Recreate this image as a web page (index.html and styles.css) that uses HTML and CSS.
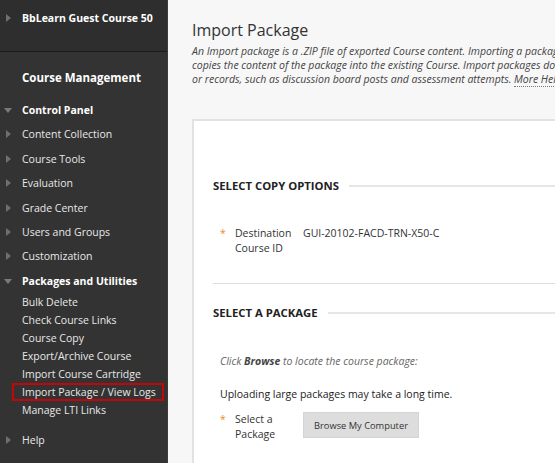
FILE: index.html
```html
<!DOCTYPE html>
<html>
<head>
<meta charset="utf-8">
<link rel="stylesheet" href="styles.css">
</head>
<body>
<div class="page">
  <aside class="sidebar">
    <div class="course-head">
      <span class="tri tri-right"></span>
      <span class="course-name">BbLearn Guest Course 50</span>
    </div>
    <div class="nav">
      <div class="nav-title">Course Management</div>
      <div class="nav-item open"><span class="tri tri-down"></span><span class="strong">Control Panel</span></div>
      <div class="nav-item"><span class="tri tri-right"></span><span>Content Collection</span></div>
      <div class="nav-item"><span class="tri tri-right"></span><span>Course Tools</span></div>
      <div class="nav-item"><span class="tri tri-right"></span><span>Evaluation</span></div>
      <div class="nav-item"><span class="tri tri-right"></span><span>Grade Center</span></div>
      <div class="nav-item"><span class="tri tri-right"></span><span>Users and Groups</span></div>
      <div class="nav-item"><span class="tri tri-right"></span><span>Customization</span></div>
      <div class="nav-item open"><span class="tri tri-down"></span><span class="strong">Packages and Utilities</span></div>
      <ul class="sub">
        <li>Bulk Delete</li>
        <li>Check Course Links</li>
        <li>Course Copy</li>
        <li>Export/Archive Course</li>
        <li>Import Course Cartridge</li>
        <li class="hl">Import Package / View Logs</li>
        <li>Manage LTI Links</li>
      </ul>
      <div class="nav-item help"><span class="tri tri-right"></span><span>Help</span></div>
    </div>
  </aside>
  <main class="main">
    <h1 class="title">Import Package</h1>
    <p class="desc">An Import package is a .ZIP file of exported Course content. Importing a package<br>copies the content of the package into the existing Course. Import packages do not include<br>or records, such as discussion board posts and assessment attempts. <span class="more">More Help</span></p>
    <section class="card">
      <div class="step">
        <h2 class="step-title"><span>SELECT COPY OPTIONS</span></h2>
        <div class="field">
          <span class="req">*</span>
          <span class="label">Destination Course ID</span>
          <span class="value">GUI-20102-FACD-TRN-X50-C</span>
        </div>
      </div>
      <div class="step step2">
        <h2 class="step-title"><span>SELECT A PACKAGE</span></h2>
        <p class="hint">Click <b>Browse</b> to locate the course package:</p>
        <p class="note">Uploading large packages may take a long time.</p>
        <div class="field field2">
          <span class="req">*</span>
          <span class="label">Select a Package</span>
          <span class="value"><button class="btn">Browse My Computer</button></span>
        </div>
      </div>
    </section>
  </main>
</div>
</body>
</html>
```
FILE: styles.css
```css
* { box-sizing: border-box; }
html, body { margin: 0; padding: 0; }
body {
  font-family: "Open Sans", "DejaVu Sans", sans-serif;
  width: 555px;
  height: 463px;
  overflow: hidden;
  background: #f7f7f7;
}
.page {
  display: flex;
  height: 463px;
}
.sidebar {
  flex: 0 0 168px;
  width: 168px;
  background: #333333;
  color: #e8e8e8;
  border-right: 1px solid #3d3d3d;
}
.course-head {
  height: 52px;
  background: #2e2e2e;
  border-bottom: 1px solid #1b1b1b;
  display: flex;
  align-items: flex-start;
  padding-top: 10px;
}
.course-name {
  font-size: 10.5px;
  font-weight: 700;
  color: #ffffff;
  line-height: 16px;
}
.tri {
  display: inline-block;
  flex: 0 0 22px;
  width: 22px;
  position: relative;
  height: 16px;
}
.tri-right::before {
  content: "";
  position: absolute;
  left: 6px;
  top: 4px;
  border-left: 5px solid #6f6f6f;
  border-top: 4px solid transparent;
  border-bottom: 4px solid transparent;
}
.tri-down::before {
  content: "";
  position: absolute;
  left: 4px;
  top: 6px;
  border-top: 5px solid #7a7a7a;
  border-left: 4.5px solid transparent;
  border-right: 4.5px solid transparent;
}
.nav {
  padding-top: 17px;
}
.nav-title {
  font-size: 11.5px;
  font-weight: 700;
  color: #ffffff;
  padding-left: 22px;
  line-height: 18px;
  margin-bottom: 15px;
}
.nav-item {
  display: flex;
  font-size: 10.5px;
  line-height: 16px;
  height: 24.4px;
  align-items: flex-start;
}
.strong { font-weight: 700; color: #ffffff; }
.nav-item.open:last-of-type { height: 16px; }
.sub {
  list-style: none;
  margin: -4px 0 0 0;
  padding: 0;
}
.sub li {
  font-size: 10.5px;
  line-height: 16px;
  height: 18px;
  padding: 1px 0 1px 22px;
  white-space: nowrap;
}
.sub li.hl {
  margin-left: 12px;
  width: 152px;
  padding-left: 8px;
  padding-top: 0;
  border: 2px solid #c4060b;
  line-height: 14px;
}
.help { margin-top: 13px; }
.main {
  flex: 1 1 auto;
  min-width: 0;
  overflow: hidden;
  padding-left: 24px;
  padding-top: 19px;
}
.title {
  margin: 0;
  font-size: 16px;
  font-weight: 400;
  color: #333;
  line-height: 22px;
}
.desc {
  margin: 3px 0 0 0;
  font-size: 10.5px;
  font-style: italic;
  color: #444;
  line-height: 14px;
  white-space: nowrap;
}
.more {
  border-bottom: 1px dotted #777;
}
.card {
  margin-top: 33px;
  width: 600px;
  height: 400px;
  background: #fff;
  border-top: 2px solid #e2e2e2;
  border-left: 2px solid #e2e2e2;
  padding-left: 19px;
}
.step {
  padding-top: 57px;
}
.step-title {
  margin: 0;
  display: flex;
  align-items: center;
  font-size: 11.3px;
  font-weight: 700;
  color: #222;
  line-height: 16px;
}
.step-title::after {
  content: "";
  flex: 1 1 auto;
  height: 2px;
  background: #e6e6e6;
  margin-left: 10px;
}
.field {
  display: flex;
  align-items: flex-start;
  font-size: 10.5px;
  color: #333;
  line-height: 15px;
  margin-top: 32px;
  padding-left: 7px;
  padding-bottom: 27px;
  border-bottom: 1px solid #dddddd;
}
.req {
  color: #f08a24;
  width: 15px;
  flex: 0 0 15px;
}
.label {
  width: 68px;
  flex: 0 0 68px;
}
.step2 {
  padding-top: 21px;
}
.hint {
  margin: 32px 0 0 7px;
  font-size: 10.5px;
  font-style: italic;
  color: #666;
  line-height: 16px;
}
.hint b { color: #444; }
.note {
  margin: 17px 0 0 7px;
  font-size: 10.5px;
  color: #222;
  line-height: 16px;
}
.field2 {
  margin-top: 10px;
  border-bottom: none;
}
.btn {
  font-family: "Open Sans", "DejaVu Sans", sans-serif;
  font-size: 9.3px;
  color: #333;
  background: #dddddd;
  border: 1px solid #d4d4d4;
  width: 116px;
  height: 26px;
  padding: 0;
}
```
